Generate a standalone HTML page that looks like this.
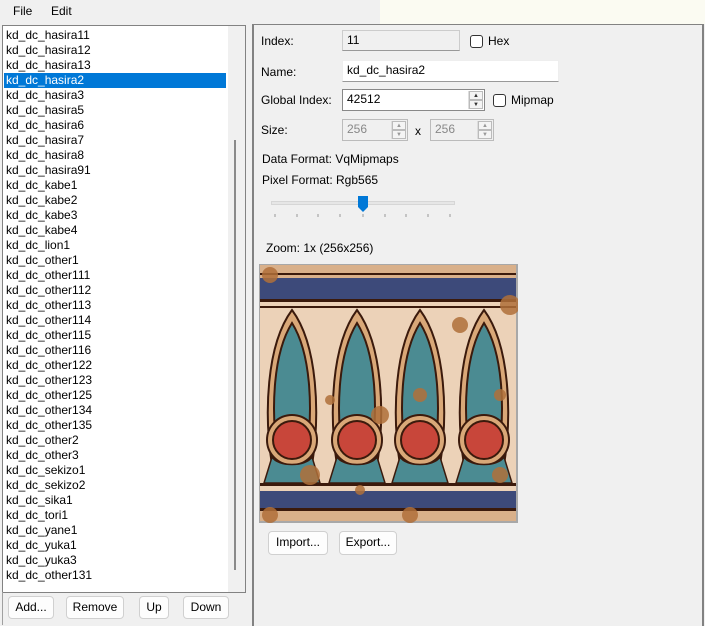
<!DOCTYPE html>
<html><head><meta charset="utf-8"><style>
*{box-sizing:border-box;margin:0;padding:0}
body{width:705px;height:625px;background:#f0f0f0;font-family:"Liberation Sans",sans-serif;font-size:12px;color:#000;position:relative;overflow:hidden}
.a{position:absolute;white-space:nowrap}
.btn{position:absolute;background:#fdfdfd;border:1px solid #d0d0d0;border-radius:4px;text-align:center;line-height:21px;font-size:12px}
.in{position:absolute;border:1px solid #c8c8c8;border-bottom-color:#8a8a8a;background:#fff;padding-left:4px;line-height:18px}
.cb{position:absolute;width:13px;height:13px;border:1px solid #333;border-radius:3px;background:#fff}
.spin{position:absolute;right:1px;top:1px;width:15px;bottom:1px;border-left:1px solid #ddd}
.spin div{height:50%;font-size:6px;text-align:center;line-height:9px;color:#333;border:1px solid #bbb;background:#f4f4f4}
</style></head><body>
<div class="a" style="left:380px;top:0;width:325px;height:24px;background:#fbfbf2"></div>
<div class="a" style="left:13px;top:4px">File</div>
<div class="a" style="left:51px;top:4px">Edit</div>

<div class="a" style="left:2px;top:25px;width:244px;height:568px;border:1px solid #828282;background:#fff"></div>
<div class="a" style="left:228px;top:26px;width:17px;height:566px;background:#f0f0f0"></div>
<div class="a" style="left:234px;top:140px;width:2px;height:430px;background:#8a8a8a"></div>
<div class="a" style="left:4px;top:73px;width:222px;height:15px;background:#0078d7"></div>
<div class="a" style="left:6px;top:28px;line-height:15px;font-size:12px">
kd_dc_hasira11<br>kd_dc_hasira12<br>kd_dc_hasira13<br><span style="color:#fff">kd_dc_hasira2</span><br>kd_dc_hasira3<br>kd_dc_hasira5<br>kd_dc_hasira6<br>kd_dc_hasira7<br>kd_dc_hasira8<br>kd_dc_hasira91<br>kd_dc_kabe1<br>kd_dc_kabe2<br>kd_dc_kabe3<br>kd_dc_kabe4<br>kd_dc_lion1<br>kd_dc_other1<br>kd_dc_other111<br>kd_dc_other112<br>kd_dc_other113<br>kd_dc_other114<br>kd_dc_other115<br>kd_dc_other116<br>kd_dc_other122<br>kd_dc_other123<br>kd_dc_other125<br>kd_dc_other134<br>kd_dc_other135<br>kd_dc_other2<br>kd_dc_other3<br>kd_dc_sekizo1<br>kd_dc_sekizo2<br>kd_dc_sika1<br>kd_dc_tori1<br>kd_dc_yane1<br>kd_dc_yuka1<br>kd_dc_yuka3<br>kd_dc_other131</div>
<div class="a" style="left:2px;top:592px;width:1px;height:33px;background:#a0a0a0"></div>
<div class="btn" style="left:8px;top:596px;width:46px;height:23px">Add...</div>
<div class="btn" style="left:66px;top:596px;width:58px;height:23px">Remove</div>
<div class="btn" style="left:139px;top:596px;width:30px;height:23px">Up</div>
<div class="btn" style="left:183px;top:596px;width:46px;height:23px">Down</div>

<div class="a" style="left:252px;top:24px;width:452px;height:602px;border:1px solid #828282;border-bottom:none;border-right:2px solid #828282;border-left:2px solid #828282"></div>
<div class="a" style="left:261px;top:34px">Index:</div>
<div class="in" style="left:342px;top:30px;width:118px;height:21px;background:#f0f0f0;border-color:#ccc #ccc #999 #ccc">11</div>
<div class="cb" style="left:470px;top:35px"></div>
<div class="a" style="left:488px;top:34px">Hex</div>
<div class="a" style="left:261px;top:65px">Name:</div>
<div class="in" style="left:342px;top:60px;width:217px;height:22px;border-color:#eee #eee #999 #eee">kd_dc_hasira2</div>
<div class="a" style="left:261px;top:93px">Global Index:</div>
<div class="in" style="left:342px;top:89px;width:143px;height:22px;border-color:#888">42512<div class="spin"><div>▲</div><div>▼</div></div></div>
<div class="cb" style="left:493px;top:94px"></div>
<div class="a" style="left:511px;top:93px">Mipmap</div>
<div class="a" style="left:261px;top:123px">Size:</div>
<div class="in" style="left:342px;top:119px;width:66px;height:22px;color:#888;border-color:#bbb;background:#f0f0f0">256<div class="spin"><div style="color:#999">▲</div><div style="color:#999">▼</div></div></div>
<div class="a" style="left:415px;top:124px">x</div>
<div class="in" style="left:430px;top:119px;width:64px;height:22px;color:#888;border-color:#bbb;background:#f0f0f0">256<div class="spin"><div style="color:#999">▲</div><div style="color:#999">▼</div></div></div>
<div class="a" style="left:262px;top:152px">Data Format: VqMipmaps</div>
<div class="a" style="left:262px;top:173px">Pixel Format: Rgb565</div>
<div class="a" style="left:271px;top:201px;width:184px;height:4px;background:#e6e6e6;border:1px solid #d6d6d6"></div>
<svg class="a" style="left:270px;top:194px" width="190" height="26">
<path d="M88 2h10v11l-5 5-5-5z" fill="#0078d7"/>
<g stroke="#999"><line x1="5" y1="20" x2="5" y2="23"/><line x1="27" y1="20" x2="27" y2="23"/><line x1="48" y1="20" x2="48" y2="23"/><line x1="70" y1="20" x2="70" y2="23"/><line x1="93" y1="20" x2="93" y2="23"/><line x1="115" y1="20" x2="115" y2="23"/><line x1="136" y1="20" x2="136" y2="23"/><line x1="158" y1="20" x2="158" y2="23"/><line x1="180" y1="20" x2="180" y2="23"/></g></svg>
<div class="a" style="left:266px;top:241px">Zoom: 1x (256x256)</div>

<svg class="a" style="left:259px;top:264px" width="259" height="259">
<rect x="0" y="0" width="259" height="259" fill="#a8a8a8"/>
<rect x="1" y="1" width="256" height="256" fill="#ecd2b8"/>
<g transform="translate(1,1)">
<rect y="0" width="256" height="14" fill="#d9b08a"/>
<rect y="8" width="256" height="2" fill="#3b1a0c"/>
<rect y="13" width="256" height="21" fill="#3d4a7a"/>
<rect y="34" width="256" height="3" fill="#3b1a0c"/>
<rect y="37" width="256" height="4" fill="#ecd2b8"/>
<rect y="41" width="256" height="2" fill="#3b1a0c"/>
<g id="p">
<path d="M32 45 C6 80 4 150 12 200 L52 200 C60 150 58 80 32 45z" fill="#d9a878" stroke="#3b1a0c" stroke-width="2"/>
<path d="M32 58 C12 90 11 150 18 190 L46 190 C53 150 52 90 32 58z" fill="#4b8b92" stroke="#3b1a0c" stroke-width="2"/>
<circle cx="32" cy="175" r="25" fill="#d9a878" stroke="#3b1a0c" stroke-width="2"/>
<circle cx="32" cy="175" r="19" fill="#c8463a" stroke="#3b1a0c" stroke-width="2"/>
<path d="M12 192 L4 218 L60 218 L52 192 C46 202 18 202 12 192z" fill="#4b8b92" stroke="#3b1a0c" stroke-width="1.5"/>
</g>
<use href="#p" x="65"/><use href="#p" x="128"/><use href="#p" x="192"/>
<rect y="218" width="256" height="3" fill="#3b1a0c"/>
<rect y="221" width="256" height="5" fill="#ecd2b8"/>
<rect y="226" width="256" height="17" fill="#3d4a7a"/>
<rect y="243" width="256" height="3" fill="#3b1a0c"/>
<rect y="246" width="256" height="10" fill="#d9b08a"/>
<g fill="#b0703a" opacity=".85"><circle cx="120" cy="150" r="9"/><circle cx="200" cy="60" r="8"/><circle cx="250" cy="40" r="10"/><circle cx="70" cy="135" r="5"/><circle cx="50" cy="210" r="10"/><circle cx="240" cy="130" r="6"/><circle cx="160" cy="130" r="7"/><circle cx="10" cy="250" r="8"/><circle cx="150" cy="250" r="8"/><circle cx="240" cy="210" r="8"/><circle cx="100" cy="225" r="5"/><circle cx="10" cy="10" r="8"/></g>
</g></svg>

<div class="btn" style="left:268px;top:531px;width:60px;height:24px">Import...</div>
<div class="btn" style="left:339px;top:531px;width:58px;height:24px">Export...</div>
</body></html>
